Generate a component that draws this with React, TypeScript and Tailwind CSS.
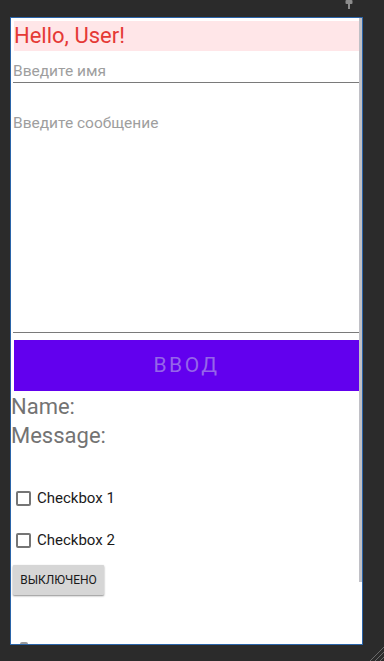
import React from "react";

export default function App() {
  return (
    <div
      className="relative w-[384px] h-[661px] overflow-hidden bg-[#2b2b2b] pt-[17px] pl-[10px]"
      style={{ fontFamily: "Roboto, 'Noto Sans', sans-serif" }}
    >
      {/* top right pin icon */}
      <svg className="absolute left-[345px] top-0" width="8" height="9" viewBox="0 0 8 9">
        <rect x="0.5" y="0" width="7" height="4" rx="1" fill="#8c8c8c" />
        <rect x="3" y="4" width="2" height="5" fill="#8c8c8c" />
      </svg>

      <div className="relative flex w-[353px] h-[628px] border border-[#2a64a8] bg-white">
        <div className="w-[348px] flex flex-col">
          <div className="mt-[3px] ml-[3px] h-[30px] bg-[#ffe6e8] flex items-center text-[22px] leading-none text-[#e53935]">
            Hello, User!
          </div>
          <div className="ml-[2px] h-[32px] pt-[11px] border-b border-[#7a7a7a] text-[15.5px] leading-[18px] text-[#9e9e9e]">
            Введите имя
          </div>
          <div className="ml-[2px] h-[250px] pt-[31px] border-b border-[#7a7a7a] text-[15.5px] leading-[18px] text-[#9e9e9e]">
            Введите сообщение
          </div>
          <div className="mt-[7px] ml-[3px] h-[51px] bg-[#6200ee] flex items-center justify-center text-[21px] tracking-[0.12em] text-[#9565e9]">
            ВВОД
          </div>
          <div className="mt-[1px] h-[29px] flex items-center text-[22px] text-[#737373]">Name:</div>
          <div className="h-[29px] flex items-center text-[22px] text-[#737373]">Message:</div>
          <div className="mt-[27px] h-[42px] flex items-center ml-[5px] gap-[6px]">
            <div className="w-[15px] h-[15px] border-2 border-[#757575] rounded-[2px]" />
            <span className="text-[15px] text-[#1a1a1a]">Checkbox 1</span>
          </div>
          <div className="h-[42px] flex items-center ml-[5px] gap-[6px]">
            <div className="w-[15px] h-[15px] border-2 border-[#757575] rounded-[2px]" />
            <span className="text-[15px] text-[#1a1a1a]">Checkbox 2</span>
          </div>
          <div className="mt-[4px] ml-[2px] w-[91px] h-[30px] bg-[#d6d6d6] shadow-[0_1px_2px_rgba(0,0,0,0.45)] rounded-[1px] flex items-center justify-center text-[12px] text-[#1a1a1a]">
            ВЫКЛЮЧЕНО
          </div>
        </div>
        <div className="w-[3px] h-[564px] bg-[#c0c0c6]" />
        <div className="absolute left-[9px] bottom-0 w-[8px] h-[2px] rounded-t-full bg-[#9a9a9a]" />
      </div>

      {/* resize handle */}
      <svg className="absolute right-0 bottom-0" width="16" height="16" viewBox="0 0 16 16">
        <line x1="2" y1="16" x2="16" y2="2" stroke="#6a6a6a" strokeWidth="1" />
        <line x1="7" y1="16" x2="16" y2="7" stroke="#6a6a6a" strokeWidth="1" />
        <line x1="12" y1="16" x2="16" y2="12" stroke="#6a6a6a" strokeWidth="1" />
      </svg>
    </div>
  );
}
